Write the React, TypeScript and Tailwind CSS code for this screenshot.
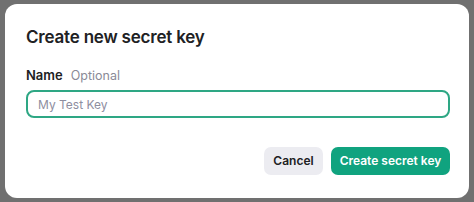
export default function App() {
  return (
    <div className="w-[474px] h-[202px] bg-[#707070] pt-[4px] pl-[5px] overflow-hidden" style={{ fontFamily: 'Inter, "Noto Sans", sans-serif' }}>
      <div className="w-[464px] h-[194px] rounded-[12px] bg-white pl-[21px] pr-[19px] pt-[21px] flex flex-col">
        <h2 className="text-[17px] leading-[24px] font-semibold text-[#202123] tracking-[-0.2px]">Create new secret key</h2>
        <div className="mt-[17px] flex items-baseline gap-[8px] text-[13px] leading-[18px]">
          <span className="font-semibold text-[#202123]">Name</span>
          <span className="text-[12.5px] text-[#8a8a96]">Optional</span>
        </div>
        <input
          className="mt-[5px] h-[28px] w-full rounded-[8px] border-2 border-[#2ea784] px-[10px] text-[12px] text-[#202123] placeholder:text-[#8e8ea0] outline-none"
          placeholder="My Test Key"
        />
        <div className="mt-[29px] flex justify-end gap-[8px]">
          <button className="h-[28px] w-[59px] rounded-[7px] bg-[#ececf1] text-[12px] font-semibold text-[#202123]">Cancel</button>
          <button className="h-[28px] w-[119px] rounded-[7px] bg-[#10a37f] text-[12px] font-semibold text-white">Create secret key</button>
        </div>
      </div>
    </div>
  )
}
